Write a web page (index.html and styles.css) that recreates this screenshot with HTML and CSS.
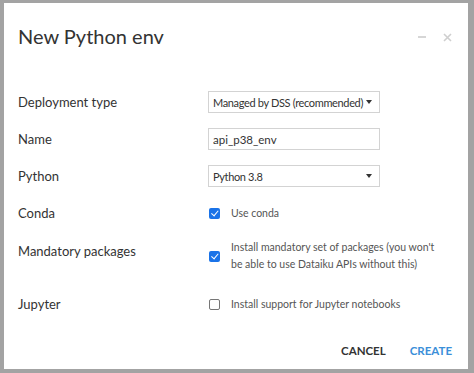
FILE: index.html
```html
<!DOCTYPE html>
<html lang="en">
<head>
  <meta charset="UTF-8">
  <title>New Python env</title>
  <link rel="stylesheet" href="styles.css">
</head>
<body>

  <div class="modal">
    <div class="modal-header">
      <h1>New Python env</h1>
      <div class="window-actions">
        <span class="minimize"></span>
        <svg class="close" width="9" height="9" viewBox="0 0 9 9">
          <path d="M1 1L8 8M8 1L1 8" stroke="#cfcfcf" stroke-width="1.6"/>
        </svg>
      </div>
    </div>

    <form class="modal-body">
      <div class="row">
        <label>Deployment type</label>
        <div class="control">
          <div class="select">Managed by DSS (recommended) <span class="caret"></span></div>
        </div>
      </div>

      <div class="row">
        <label>Name</label>
        <div class="control">
          <input type="text" class="text-input" value="api_p38_env">
        </div>
      </div>

      <div class="row">
        <label>Python</label>
        <div class="control">
          <div class="select">Python 3.8 <span class="caret"></span></div>
        </div>
      </div>

      <div class="row">
        <label>Conda</label>
        <div class="control check">
          <span class="box checked"></span>
          <span class="help">Use conda</span>
        </div>
      </div>

      <div class="row tall">
        <label>Mandatory packages</label>
        <div class="control check">
          <span class="box checked"></span>
          <span class="help">Install mandatory set of packages (you won't be able to use Dataiku APIs without this)</span>
        </div>
      </div>

      <div class="row">
        <label>Jupyter</label>
        <div class="control check">
          <span class="box"></span>
          <span class="help">Install support for Jupyter notebooks</span>
        </div>
      </div>
    </form>

    <div class="modal-footer">
      <button type="button" class="btn">CANCEL</button>
      <button type="button" class="btn primary">CREATE</button>
    </div>
  </div>

</body>
</html>
```

FILE: styles.css
```css
html, body { margin: 0; padding: 0; }
body {
  width: 474px;
  height: 373px;
  background: #a3a3a3;
  font-family: Lato, "Liberation Sans", sans-serif;
  color: #333;
  overflow: hidden;
}
.modal {
  margin: 3px 6px 0 4px;
  height: 366px;
  background: #fff;
  display: flex;
  flex-direction: column;
}
.modal-header {
  display: flex;
  align-items: center;
  justify-content: space-between;
  padding: 21px 16px 0 14px;
  height: 26px;
}
h1 {
  margin: 0 0 3px;
  font-size: 20px;
  font-weight: 400;
  color: #333;
}
.window-actions { display: flex; align-items: center; gap: 17px; }
.minimize { display: block; width: 8px; height: 1.5px; background: #d6d6d6; }

.modal-body { padding: 41px 0 0 14px; }
.row {
  display: grid;
  grid-template-columns: 190px 1fr;
  align-items: center;
  height: 22px;
  margin-bottom: 15px;
}
.row.tall { height: 34px; margin-bottom: 20px; }
.row label { font-size: 13px; color: #333; }
.row.tall label { align-self: start; margin-top: 4px; }

.select, .text-input {
  box-sizing: border-box;
  width: 172px;
  height: 22px;
  border: 1px solid #d3d3d3;
  padding: 0 4px;
  font-family: inherit;
  font-size: 11.5px;
  color: #333;
  background: #fff;
}
.select {
  font-size: 11px;
  white-space: nowrap;
  letter-spacing: -0.35px;
  display: flex;
  align-items: center;
  justify-content: space-between;
}
.text-input { display: block; outline: none; }
.caret {
  flex: none;
  width: 0; height: 0;
  border-left: 3.5px solid transparent;
  border-right: 3.5px solid transparent;
  border-top: 4px solid #333;
  margin-right: 3px;
}

.check { display: flex; align-items: center; gap: 11px; }
.box {
  box-sizing: border-box;
  flex: none;
  width: 11px; height: 11px;
  border: 1px solid #767676;
  border-radius: 2px;
  margin-left: 1px;
  background: #fff;
}
.box.checked {
  border: none;
  background: #1a73e8;
  position: relative;
}
.box.checked::after {
  content: "";
  position: absolute;
  left: 3.5px; top: 1.5px;
  width: 3px; height: 5.5px;
  border: solid #fff;
  border-width: 0 1.7px 1.7px 0;
  transform: rotate(40deg);
}
.help { font-size: 10.5px; color: #555; line-height: 17px; max-width: 210px; }

.modal-footer {
  margin-top: auto;
  display: flex;
  justify-content: flex-end;
  gap: 24px;
  padding: 0 16px 12px 0;
}
.btn {
  border: none;
  background: none;
  padding: 0;
  font-family: inherit;
  font-size: 11.5px;
  font-weight: 700;
  color: #333;
}
.btn.primary { color: #3b8fd9; }
```
